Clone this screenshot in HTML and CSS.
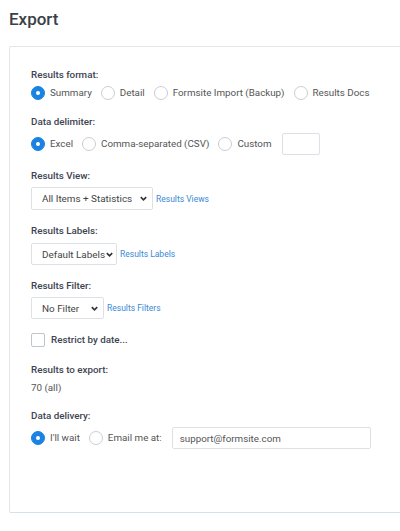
FILE: index.html
```html
<!DOCTYPE html>
<html>
<head>
<meta charset="utf-8">
<link rel="stylesheet" href="styles.css">
</head>
<body>
<h1 class="title">Export</h1>
<div class="card">
  <div class="group">
    <div class="label">Results format:</div>
    <div class="row">
      <span class="opt"><span class="radio on"></span>Summary</span>
      <span class="opt"><span class="radio"></span>Detail</span>
      <span class="opt"><span class="radio"></span>Formsite Import (Backup)</span>
      <span class="opt"><span class="radio"></span>Results Docs</span>
    </div>
  </div>
  <div class="group g2">
    <div class="label">Data delimiter:</div>
    <div class="row">
      <span class="opt"><span class="radio on"></span>Excel</span>
      <span class="opt"><span class="radio"></span>Comma-separated (CSV)</span>
      <span class="opt"><span class="radio"></span>Custom</span>
      <input class="text small" type="text">
    </div>
  </div>
  <div class="group">
    <div class="label">Results View:</div>
    <div class="row">
      <span class="sel w-view">All Items + Statistics<svg class="chev" viewBox="0 0 10 10"><path d="M2 3.5 L5 6.5 L8 3.5" fill="none" stroke="#333" stroke-width="1.8"/></svg></span>
      <a class="link">Results Views</a>
    </div>
  </div>
  <div class="group g4">
    <div class="label">Results Labels:</div>
    <div class="row">
      <span class="sel w-labels">Default Labels<svg class="chev" viewBox="0 0 10 10"><path d="M2 3.5 L5 6.5 L8 3.5" fill="none" stroke="#333" stroke-width="1.8"/></svg></span>
      <a class="link">Results Labels</a>
    </div>
  </div>
  <div class="group">
    <div class="label">Results Filter:</div>
    <div class="row">
      <span class="sel w-filter">No Filter<svg class="chev" viewBox="0 0 10 10"><path d="M2 3.5 L5 6.5 L8 3.5" fill="none" stroke="#333" stroke-width="1.8"/></svg></span>
      <a class="link">Results Filters</a>
    </div>
  </div>
  <div class="group">
    <label class="check"><span class="box"></span>Restrict by date...</label>
  </div>
  <div class="group g6">
    <div class="label">Results to export:</div>
    <div class="value">70 (all)</div>
  </div>
  <div class="group">
    <div class="label">Data delivery:</div>
    <div class="row">
      <span class="opt"><span class="radio on"></span>I'll wait</span>
      <span class="opt"><span class="radio"></span>Email me at:</span>
      <input class="text email" type="text" value="support@formsite.com">
    </div>
  </div>
</div>
</body>
</html>
```
FILE: styles.css
```css
html, body {
  margin: 0;
  padding: 0;
  background: #fff;
}
body {
  font-family: Roboto, "Liberation Sans", sans-serif;
  color: #555;
  font-size: 10px;
  padding: 0 0 0 9px;
}
.title {
  margin: 0;
  padding-top: 8px;
  height: 46px;
  font-size: 17px;
  font-weight: 500;
  color: #3b4047;
  line-height: 22px;
  box-sizing: border-box;
}
.card {
  border: 1px solid #e3e6ea;
  border-bottom-color: #d4e0ea;
  border-right: none;
  border-radius: 2px 0 0 2px;
  padding: 21px 0 63px 21px;
  height: 467px;
  box-sizing: border-box;
  display: flex;
  flex-direction: column;
  gap: 14px;
}
.group {
  display: flex;
  flex-direction: column;
  gap: 4px;
}
.g2 { margin-top: 1px; }
.g4 { gap: 5px; }
.g6 { margin-top: 2px; }
.label {
  font-weight: 500;
  color: #3d4450;
  line-height: 14px;
  font-size: 9.8px;
}
.row {
  display: flex;
  align-items: center;
  min-height: 14px;
}
.opt {
  display: inline-flex;
  align-items: center;
  gap: 5px;
  margin-right: 9px;
  line-height: 14px;
  font-size: 9.8px;
  color: #555;
  white-space: nowrap;
}
.radio {
  width: 12px;
  height: 12px;
  border: 1px solid #c9ced4;
  border-radius: 50%;
  display: inline-block;
  box-sizing: content-box;
  flex: none;
}
.radio.on {
  background: #1a82e2;
  border-color: #1a82e2;
  position: relative;
}
.radio.on::after {
  content: "";
  position: absolute;
  left: 4px;
  top: 4px;
  width: 4px;
  height: 4px;
  border-radius: 50%;
  background: #fff;
}
.text {
  height: 22px;
  box-sizing: border-box;
  border: 1px solid #dde1e5;
  border-radius: 2px;
  font-family: inherit;
  font-size: 9.8px;
  color: #555;
  padding: 0 7px;
  outline: none;
}
.small {
  width: 38px;
  margin-left: 1px;
}
.email {
  width: 199px;
  margin-left: 1px;
}
.sel {
  display: inline-flex;
  align-items: center;
  justify-content: space-between;
  height: 23px;
  box-sizing: border-box;
  border: 1px solid #dde1e5;
  border-radius: 2px;
  padding: 0 4px 0 10px;
  font-size: 9.9px;
  color: #444;
  white-space: nowrap;
}
.w-view { width: 122px; }
.w-labels { width: 86px; height: 22px; padding-right: 2px; }
.w-filter { width: 73px; height: 22px; }
.chev {
  width: 9px;
  height: 9px;
  flex: none;
}
.link {
  margin-left: 3px;
  font-size: 8.5px;
  color: #3a8ad6;
  cursor: pointer;
}
.check {
  display: flex;
  align-items: center;
  gap: 6px;
  font-weight: 500;
  color: #3d4450;
  font-size: 9.8px;
  line-height: 14px;
}
.box {
  width: 12px;
  height: 12px;
  border: 1px solid #bfc5cc;
  border-radius: 2px;
  display: inline-block;
}
.value {
  line-height: 14px;
  color: #555;
  font-size: 9.8px;
}
```
